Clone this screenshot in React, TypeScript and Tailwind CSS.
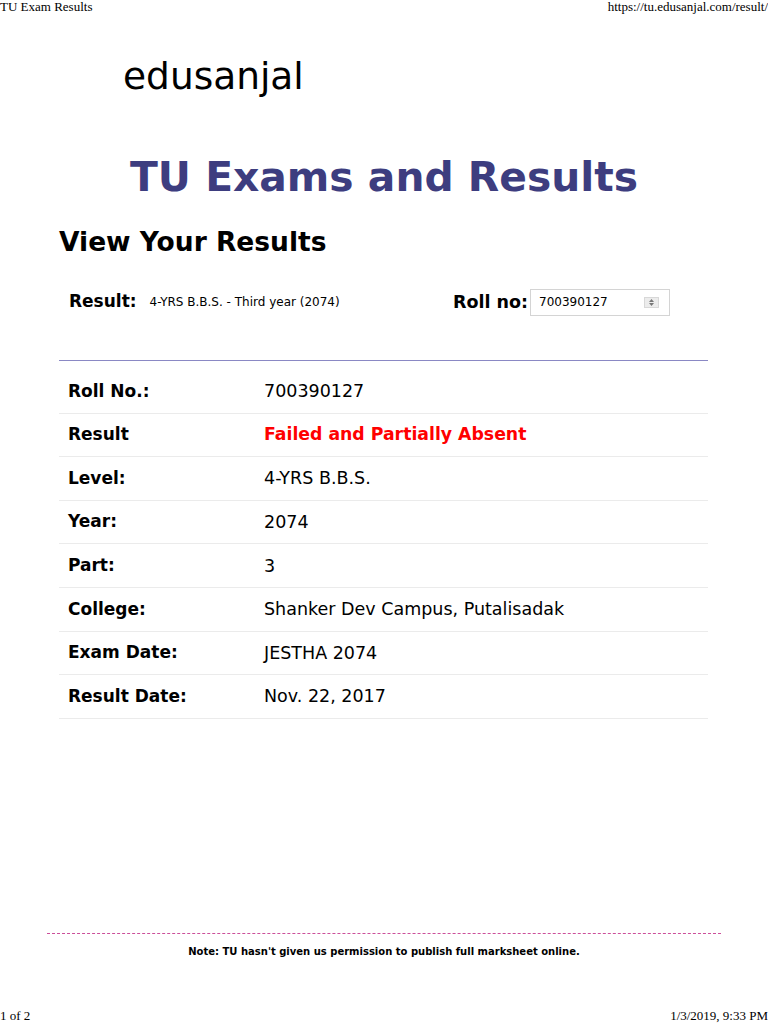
const ROWS = [
  { label: 'Roll No.:', value: '700390127' },
  { label: 'Result', value: 'Failed and Partially Absent', red: true },
  { label: 'Level:', value: '4-YRS B.B.S.' },
  { label: 'Year:', value: '2074' },
  { label: 'Part:', value: '3' },
  { label: 'College:', value: 'Shanker Dev Campus, Putalisadak' },
  { label: 'Exam Date:', value: 'JESTHA 2074' },
  { label: 'Result Date:', value: 'Nov. 22, 2017' },
]

const sans = "font-['DejaVu_Sans',Verdana,sans-serif]"
const serif = "font-['Liberation_Serif',serif]"

export default function App() {
  return (
    <div className="h-[1024px] bg-white flex flex-col text-black">
      {/* print header */}
      <div className={`${serif} flex justify-between text-[13px] leading-[14px]`}>
        <span>TU Exam Results</span>
        <span>https://tu.edusanjal.com/result/</span>
      </div>

      <div className={`${sans} flex-1 flex flex-col`}>
        <div className="pl-[123px] pt-[40px] text-[37.5px] leading-[44px]">edusanjal</div>

        <h1 className="mt-[55px] text-center text-[40.8px] leading-[48px] font-bold text-[#3d3d7f]">
          TU Exams and Results
        </h1>

        <div className="mx-[59px] w-[649px]">
          <h2 className="mt-[23px] text-[26.5px] leading-[36px] font-bold">View Your Results</h2>

          {/* search form */}
          <div className="mt-[28px] flex items-center h-[28px]">
            <span className="ml-[10px] text-[17px] font-bold">Result:</span>
            <span className="ml-[13px] text-[12px]">4-YRS B.B.S. - Third year (2074)</span>
            <span className="ml-auto text-[17.5px] font-bold">Roll no:</span>
            <div className="ml-[2px] mr-[38px] w-[140px] h-[27px] border border-[#d4d4d4] flex items-center pl-[8px] pr-[10px] text-[12px]">
              <span>700390127</span>
              <div className="ml-auto w-[15px] h-[11px] bg-[#ececec] border border-[#d8d8d8] flex flex-col items-center justify-center gap-[1px]">
                <svg width="5" height="3" viewBox="0 0 5 3"><path d="M2.5 0 L5 3 L0 3 Z" fill="#777" /></svg>
                <svg width="5" height="3" viewBox="0 0 5 3"><path d="M0 0 L5 0 L2.5 3 Z" fill="#777" /></svg>
              </div>
            </div>
          </div>

          <div className="mt-[44px] border-t-[1.5px] border-[#8a88c4]" />

          {/* result table */}
          <div className="mt-[9px]">
            {ROWS.map(r => (
              <div key={r.label} className="flex items-center h-[43.6px] border-b border-[#ebebeb] text-[17.3px]">
                <span className="pl-[9px] w-[205px] font-bold text-[17px]">{r.label}</span>
                <span className={r.red ? 'font-bold text-[#ff0000]' : 'text-[17.5px]'}>{r.value}</span>
              </div>
            ))}
          </div>
        </div>

        <div className="mt-auto mx-[47px] border-t border-dashed border-[#cc4f9a]" />
        <p className="mt-[10px] text-center text-[10px] font-bold">
          Note: TU hasn't given us permission to publish full marksheet online.
        </p>
        <div className="h-[50px]" />
      </div>

      <div className={`${serif} flex justify-between text-[13px] leading-[14px] pb-[1px]`}>
        <span>1 of 2</span>
        <span>1/3/2019, 9:33 PM</span>
      </div>
    </div>
  )
}
